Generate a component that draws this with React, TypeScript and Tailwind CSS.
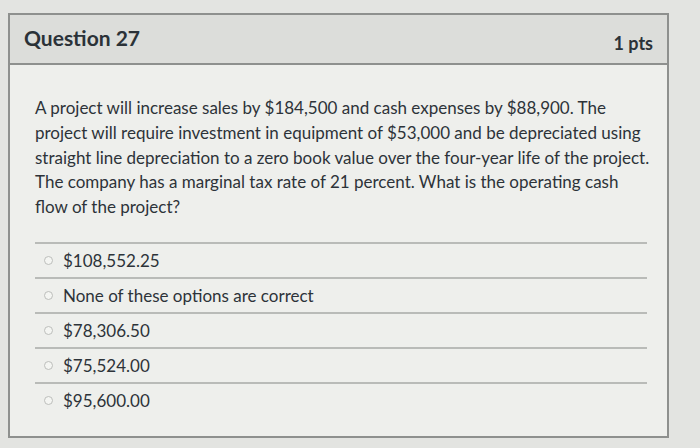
const options = [
  "$108,552.25",
  "None of these options are correct",
  "$78,306.50",
  "$75,524.00",
  "$95,600.00",
];

export default function App() {
  return (
    <div
      className="w-[700px] h-[448px] bg-[#e3e4e1] pt-[13px] pl-[8px] overflow-hidden"
      style={{ fontFamily: "Lato, 'Open Sans', sans-serif" }}
    >
      <div className="w-[661px] h-[425px] border-2 border-[#8e908e] bg-[#eeefec] flex flex-col">
        {/* header */}
        <div className="h-[50px] shrink-0 bg-[#dcddda] border-b-2 border-[#8e908e] flex items-center justify-between pl-[14px] pr-[14px]">
          <h2 className="text-[21px] font-bold text-[#2b3238] pb-[2px]">Question 27</h2>
          <span className="text-[18px] font-bold text-[#2b3238] pt-[8px]">1 pts</span>
        </div>

        {/* body */}
        <div className="pl-[25px] pr-[20px] pt-[31px] whitespace-nowrap">
          <p className="text-[17px] leading-[24.8px] text-[#2d3339]">
            A project will increase sales by $184,500 and cash expenses by $88,900. The
            <br />
            project will require investment in equipment of $53,000 and be depreciated using
            <br />
            straight line depreciation to a zero book value over the four-year life of the project.
            <br />
            The company has a marginal tax rate of 21 percent. What is the operating cash
            <br />
            flow of the project?
          </p>

          <div className="mt-[22px] w-[612px]">
            {options.map((opt) => (
              <div key={opt} className="border-t-2 border-[#b9bbb8] h-[35px] flex items-center">
                <span className="ml-[9px] w-[9px] h-[9px] rounded-full border border-[#bcbebb] bg-[#f4f5f2] shrink-0" />
                <span className="ml-[10px] text-[17px] text-[#2d3339] pt-[1px]">{opt}</span>
              </div>
            ))}
          </div>
        </div>
      </div>
    </div>
  );
}
